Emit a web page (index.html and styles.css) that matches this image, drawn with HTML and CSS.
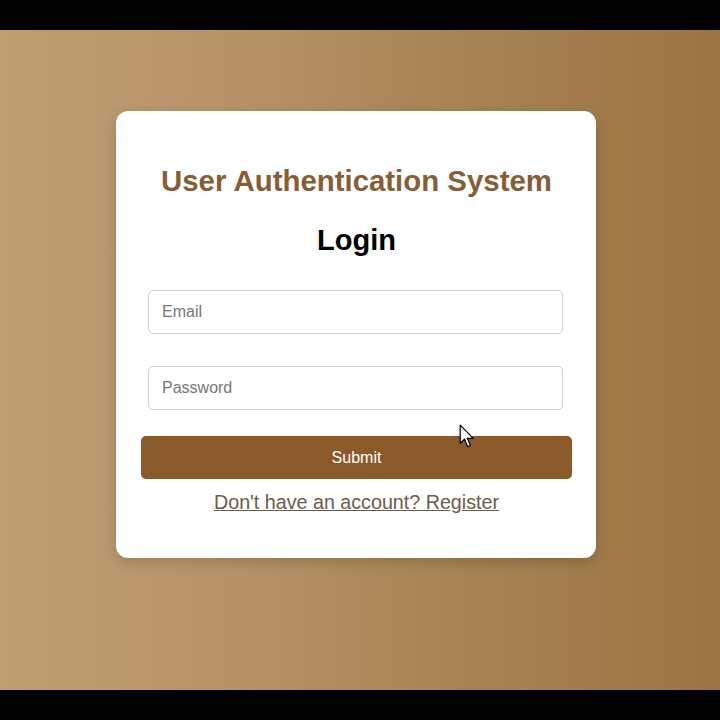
FILE: index.html
```html
<!DOCTYPE html>
<html lang="en">
<head>
<meta charset="utf-8">
<title>User Authentication System</title>
<link rel="stylesheet" href="styles.css">
</head>
<body>
<div class="screen">
  <div class="card">
    <h1 class="title">User Authentication System</h1>
    <h2 class="subtitle">Login</h2>
    <form class="form">
      <input class="field" type="email" placeholder="Email">
      <input class="field" type="password" placeholder="Password">
      <button class="submit" type="button">Submit</button>
    </form>
    <a class="switch" href="#">Don't have an account? Register</a>
  </div>
  <svg class="cursor" width="16" height="25" viewBox="0 0 14 22" xmlns="http://www.w3.org/2000/svg">
    <path d="M1 1 L1 17 L4.8 13.4 L7.6 20 L10 19 L7.3 12.6 L12.5 12.6 Z" fill="#fff" stroke="#000" stroke-width="1.1" stroke-linejoin="round"/>
  </svg>
</div>
</body>
</html>
```
FILE: styles.css
```css
html, body {
  margin: 0;
  padding: 0;
  background: #000;
}
body {
  padding: 30px 0;
  font-family: "Liberation Sans", Arial, sans-serif;
}
.screen {
  position: relative;
  height: 660px;
  background: linear-gradient(to right, #bf9e73 0%, #b8946a 30%, #a98557 60%, #9c7442 100%);
  padding-top: 81px;
  box-sizing: border-box;
}
.card {
  width: 480px;
  margin-left: 116px;
  box-sizing: border-box;
  background: #fff;
  border-radius: 12px;
  box-shadow: 0 4px 14px rgba(0, 0, 0, 0.18);
  padding: 53px 24px 45px 25px;
  display: flex;
  flex-direction: column;
  align-items: center;
}
.title {
  margin: 0;
  font-size: 29.4px;
  line-height: 34px;
  font-weight: bold;
  color: #875d34;
}
.subtitle {
  margin: 25px 0 0;
  font-size: 29px;
  line-height: 34px;
  font-weight: bold;
  color: #000;
}
.form {
  margin-top: 33px;
  width: 100%;
  display: flex;
  flex-direction: column;
  align-items: flex-start;
}
.field {
  width: 415px;
  height: 44px;
  margin-left: 7px;
  box-sizing: border-box;
  border: 1px solid #cfcfcf;
  border-radius: 5px;
  padding: 0 13px;
  font-family: "Liberation Sans", Arial, sans-serif;
  font-size: 16px;
  color: #333;
  background: #fff;
  outline: none;
}
.field::placeholder {
  color: #777;
}
.field + .field {
  margin-top: 32px;
}
.submit {
  margin-top: 26px;
  width: 100%;
  height: 43px;
  border: none;
  border-radius: 5px;
  background: #8b5a2b;
  color: #fff;
  font-family: "Liberation Sans", Arial, sans-serif;
  font-size: 16px;
}
.switch {
  margin-top: 12px;
  font-size: 19.7px;
  line-height: 22px;
  color: #6e5b48;
  text-decoration: underline;
}
.cursor {
  position: absolute;
  left: 459px;
  top: 394px;
}
```
